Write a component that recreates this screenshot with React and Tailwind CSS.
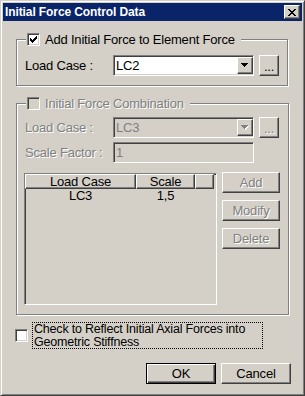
import React from "react";

const sunken =
  "border border-t-[#808080] border-l-[#808080] border-b-white border-r-white shadow-[inset_1px_1px_0_#404040,inset_-1px_-1px_0_#d4d0c8]";
const raised =
  "border border-t-white border-l-white border-b-[#404040] border-r-[#404040] shadow-[inset_-1px_-1px_0_#808080]";
const etched =
  "border border-[#808080] shadow-[inset_1px_1px_0_#fff,1px_1px_0_#fff]";
const dim = "text-[#808080] [text-shadow:1px_1px_0_#fff]";

function CheckBox({ checked, disabled }) {
  return (
    <span
      className={`flex h-[13px] w-[13px] shrink-0 items-center justify-center ${sunken} ${
        disabled ? "bg-[#d4d0c8]" : "bg-white"
      }`}
    >
      {checked && (
        <svg width="7" height="7" viewBox="0 0 7 7" shapeRendering="crispEdges">
          <path d="M6 0h1v3h-1v1h-1v1h-1v1h-1v1h-1v-1h-1v-1h-1v-3h1v1h1v1h1v-1h1v-1h1v-1h1z" fill="#000" />
        </svg>
      )}
    </span>
  );
}

function Arrow({ disabled }) {
  return (
    <svg width="8" height="5" viewBox="0 0 8 5" shapeRendering="crispEdges">
      {disabled && <path d="M1 1h7v1h-1v1h-1v1h-1v1h-1v-1h-1v-1h-1v-1h-1z" fill="#fff" />}
      <path d="M0 0h7v1h-1v1h-1v1h-1v1h-1v-1h-1v-1h-1v-1h-1z" fill={disabled ? "#808080" : "#000"} />
    </svg>
  );
}

function Combo({ value, disabled }) {
  return (
    <div
      className={`flex h-[21px] w-[141px] items-center ${sunken} ${
        disabled ? "bg-[#d4d0c8]" : "bg-white"
      }`}
    >
      <span className={`flex-1 pl-[2px] ${disabled ? "text-[#808080]" : ""}`}>{value}</span>
      <span
        className={`flex h-[17px] w-[16px] items-center justify-center bg-[#d4d0c8] ${raised}`}
      >
        <Arrow disabled={disabled} />
      </span>
    </div>
  );
}

function DotsButton({ disabled }) {
  return (
    <span
      className={`ml-[5px] flex h-[21px] w-[20px] items-end justify-center pb-[3px] leading-[10px] ${raised} ${
        disabled ? dim : ""
      }`}
    >
      ...
    </span>
  );
}

function Button({ label, disabled, isDefault, className = "" }) {
  return (
    <span
      className={`flex h-[21px] items-center justify-center ${
        isDefault
          ? "border border-black shadow-[inset_1px_1px_0_#fff,inset_-1px_-1px_0_#404040,inset_-2px_-2px_0_#808080]"
          : raised
      } ${disabled ? dim : ""} ${className}`}
    >
      {label}
    </span>
  );
}

function CloseGlyph() {
  const rows = [
    [0, 2, 6, 8],
    [1, 3, 5, 7],
    [2, 6],
    [3, 5],
    [2, 6],
    [1, 3, 5, 7],
    [0, 2, 6, 8],
  ];
  return (
    <svg width="8" height="7" viewBox="0 0 8 7" shapeRendering="crispEdges">
      {rows.map((r, y) =>
        r.length === 4 ? (
          <g key={y}>
            <rect x={r[0]} y={y} width={r[1] - r[0]} height="1" />
            <rect x={r[2]} y={y} width={r[3] - r[2]} height="1" />
          </g>
        ) : (
          <rect key={y} x={r[0]} y={y} width={r[1] - r[0]} height="1" />
        )
      )}
    </svg>
  );
}

export default function App() {
  return (
    <div
      className="h-[396px] w-[305px] bg-[#d4d0c8] p-[2px] font-['Liberation_Sans',Arial,sans-serif] text-[13px] leading-[15px] tracking-[-0.2px] text-black border border-t-[#d4d0c8] border-l-[#d4d0c8] border-b-[#404040] border-r-[#404040] shadow-[inset_1px_1px_0_#fff,inset_-1px_-1px_0_#808080]"
    >
      {/* title bar */}
      <div className="flex h-[18px] items-center justify-between bg-[#0a246a] pl-[2px] pr-[2px]">
        <span className="text-[12px] font-bold tracking-[-0.1px] text-white">Initial Force Control Data</span>
        <span className={`flex h-[14px] w-[16px] items-center justify-center bg-[#d4d0c8] ${raised}`}>
          <CloseGlyph />
        </span>
      </div>

      {/* group 1 */}
      <fieldset className={`ml-[13px] mt-[11px] w-[272px] px-[8px] pb-[9px] pt-[8px] ${etched}`}>
        <legend className="ml-[1px] flex h-[15px] items-center gap-[5px] bg-[#d4d0c8] pl-[1px] pr-[6px]">
          <CheckBox checked />
          <span>Add Initial Force to Element Force</span>
        </legend>
        <div className="flex items-center">
          <span className="w-[88px]">Load Case :</span>
          <Combo value="LC2" />
          <DotsButton />
        </div>
      </fieldset>

      {/* group 2 */}
      <fieldset className={`ml-[13px] mt-[10px] w-[272px] px-[8px] pb-[9px] pt-[6px] ${etched}`}>
        <legend className="ml-[1px] flex h-[15px] items-center gap-[5px] bg-[#d4d0c8] pl-[1px] pr-[6px]">
          <CheckBox disabled />
          <span className={dim}>Initial Force Combination</span>
        </legend>
        <div className="flex items-center">
          <span className={`w-[88px] ${dim}`}>Load Case :</span>
          <Combo value="LC3" disabled />
          <DotsButton disabled />
        </div>
        <div className="mt-[4px] flex items-center">
          <span className={`w-[88px] ${dim}`}>Scale Factor :</span>
          <span className={`flex h-[21px] w-[141px] items-center pl-[2px] text-[#808080] ${sunken}`}>1</span>
        </div>
        <div className="mt-[10px] ml-[-1px] flex gap-[5px]">
          <div className={`flex h-[132px] w-[193px] flex-col ${sunken}`}>
            <div className="flex h-[15px] leading-[13px]">
              <span className={`w-[111px] text-center ${raised}`}>Load Case</span>
              <span className={`w-[59px] text-center ${raised}`}>Scale</span>
              <span className={`w-[19px] ${raised}`} />
            </div>
            <div className="flex h-[14px] leading-[14px]">
              <span className="w-[111px] text-center">LC3</span>
              <span className="w-[59px] text-center">1,5</span>
            </div>
          </div>
          <div className="flex flex-col gap-[7px] -mt-[1px]">
            <Button label="Add" disabled className="w-[58px]" />
            <Button label="Modify" disabled className="w-[58px]" />
            <Button label="Delete" disabled className="w-[58px]" />
          </div>
        </div>
      </fieldset>

      {/* reflect axial forces */}
      <div className="ml-[12px] mt-[7px] flex items-center gap-[4px]">
        <CheckBox />
        <span className="w-[231px] whitespace-nowrap border border-dotted border-black px-[1px] text-[12.5px] leading-[12.5px] tracking-[-0.2px]">
          Check to Reflect Initial Axial Forces into
          <br />
          Geometric Stiffness
        </span>
      </div>

      {/* footer buttons */}
      <div className="mr-[11px] mt-[14px] flex justify-end gap-[5px]">
        <Button label="OK" isDefault className="w-[70px]" />
        <Button label="Cancel" className="w-[70px]" />
      </div>
    </div>
  );
}
